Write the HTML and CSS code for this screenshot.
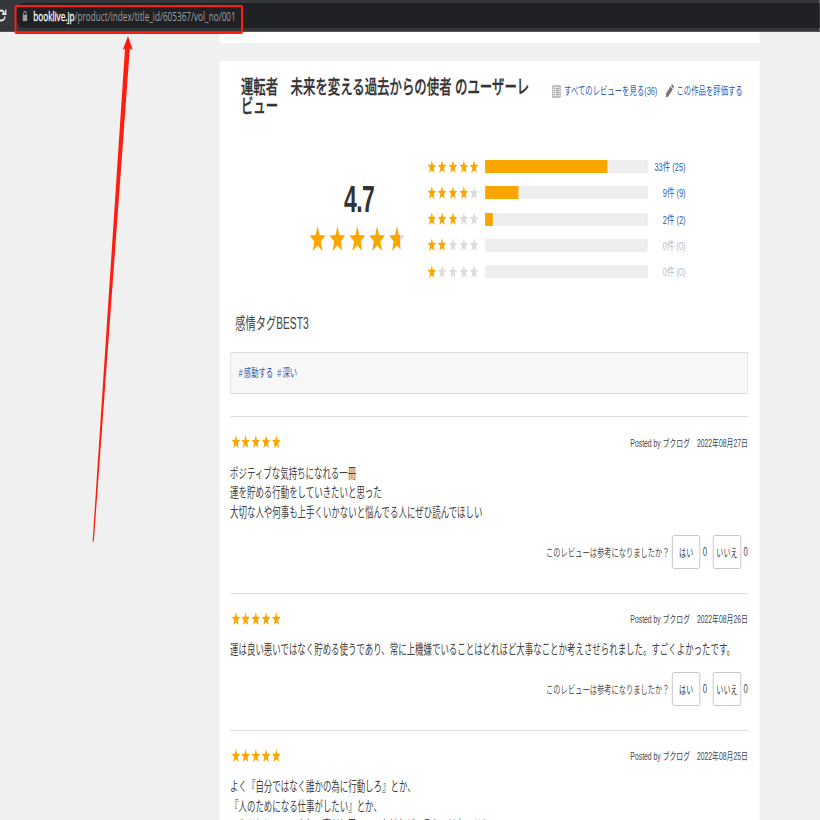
FILE: index.html
```html
<!DOCTYPE html>
<html lang="ja">

<head>
    <meta charset="UTF-8">
    <meta name="viewport" content="width=device-width, initial-scale=1.0">
    <title>ユーザーレビュー</title>
    <link rel="stylesheet" href="styles.css">
</head>

<body>

    <svg class="defs">
        <symbol id="star" viewBox="0 0 24 24" preserveAspectRatio="none">
            <path d="M12 0L15 8.7L24 9.1L17 14.8L19.5 24L12 18.8L4.5 24L7 14.8L0 9.1L9 8.7Z" />
        </symbol>
    </svg>

    <div class="page">
        <div class="toolbar">
            <svg class="reload" viewBox="0 0 11 13">
                <path d="M0 1.8C3 1 5.5 2 7 4.5M0 11.2C4 12 7 10.5 8 7.5M9 .5V5H3.5" />
            </svg>
            <div class="address">
                <svg class="lock" viewBox="0 0 9 12">
                    <path d="M2 5V3.2a2.5 2.5 0 0 1 5 0V5" />
                    <rect x="0" y="4.5" width="9" height="7.5" rx="1" />
                </svg>
                <span class="url"><b>booklive.jp</b>/product/index/title_id/605367/vol_no/001</span>
            </div>
        </div>

        <div class="strip"></div>

        <div class="container">
            <div class="header">
                <h2>運転者　未来を変える過去からの使者 のユーザーレビュー</h2>
                <div class="links">
                    <a>
                        <svg class="icon-list" viewBox="0 0 14 13">
                            <path d="M.5 .5H13.5V12.5H.5ZM3 3.2H4.5M6 3.2H11.5M3 5.4H4.5M6 5.4H11.5M3 7.6H4.5M6 7.6H11.5M3 9.8H4.5M6 9.8H11.5" />
                        </svg>
                        すべてのレビューを見る(36)
                    </a>
                    <a>
                        <svg class="icon-pen" viewBox="0 0 14 14">
                            <path d="M0 14L1 9.5L8.5 2L12 5.5L4.5 13ZM9.3 1.2L10.5 0H12L14 2V3.5L12.8 4.7Z" />
                        </svg>
                        この作品を評価する
                    </a>
                </div>
            </div>

            <div class="summary">
                <div class="score">
                    <div class="number">4.7</div>
                    <div class="stars big">
                        <svg><use href="#star" /></svg><svg><use href="#star" /></svg><svg><use href="#star" /></svg><svg><use href="#star" /></svg><svg class="part" viewBox="0 0 24 24" preserveAspectRatio="none">
                            <linearGradient id="partial">
                                <stop offset="0.7" stop-color="#f9a700" />
                                <stop offset="0.7" stop-color="#dcdcdc" />
                            </linearGradient>
                            <path d="M12 0L15 8.7L24 9.1L17 14.8L19.5 24L12 18.8L4.5 24L7 14.8L0 9.1L9 8.7Z" />
                        </svg>
                    </div>
                </div>
                <div class="graph" id="graph"></div>
            </div>

            <h3>感情タグBEST3</h3>
            <div class="tags"><a><i>#</i>感動する</a><a><i>#</i>深い</a></div>

            <div id="reviews"></div>
        </div>
    </div>

    <svg class="marker" viewBox="0 0 260 560">
        <rect x="15.5" y="6" width="226.5" height="27" rx="1" />
        <path d="M128 36L132.7 50L129.8 48.5L93.8 541.5H92.6L125 48.5L122.7 50Z" />
    </svg>

    <script>
        const graph = [
            { stars: 5, width: 75, label: '33件 (25)' },
            { stars: 4, width: 20.5, label: '9件 (9)' },
            { stars: 3, width: 4.6, label: '2件 (2)' },
            { stars: 2, width: 0, label: '0件 (0)' },
            { stars: 1, width: 0, label: '0件 (0)' }
        ];

        const reviews = [
            { date: '2022年08月27日', text: ['ポジティブな気持ちになれる一冊', '運を貯める行動をしていきたいと思った', '大切な人や何事も上手くいかないと悩んでる人にぜひ読んでほしい'] },
            { date: '2022年08月26日', text: ['運は良い悪いではなく貯める使うであり、常に上機嫌でいることはどれほど大事なことか考えさせられました。すごくよかったです。'] },
            { date: '2022年08月25日', text: ['よく『自分ではなく誰かの為に行動しろ』とか、', '『人のためになる仕事がしたい』とか、', 'いうことについてきれい事だと思っていたけれど、そうではないこと'] }
        ];

        function stars(count) {
            let html = '';
            for (let i = 0; i < 5; i++) {
                html += `<svg class="${i < count ? '' : 'off'}"><use href="#star" /></svg>`;
            }
            return html;
        }

        document.getElementById('graph').innerHTML = graph.map(row => `
            <div class="row">
                <div class="stars">${stars(row.stars)}</div>
                <div class="bar"><div class="fill" style="width: ${row.width}%"></div></div>
                <div class="count ${row.width ? '' : 'none'}">${row.label}</div>
            </div>`).join('');

        document.getElementById('reviews').innerHTML = reviews.map(review => `
            <div class="review">
                <div class="review-head">
                    <div class="stars">${stars(5)}</div>
                    <div class="posted">Posted by ブクログ　${review.date}</div>
                </div>
                <p>${review.text.join('<br>')}</p>
                <div class="vote">
                    <span>このレビューは参考になりましたか？</span>
                    <button>はい</button><span class="votes">0</span>
                    <button>いいえ</button><span class="votes">0</span>
                </div>
            </div>`).join('');
    </script>

</body>

</html>
```
FILE: styles.css
```css
html {
    overflow: hidden;
}

body {
    margin: 0;
    height: 820px;
    overflow: hidden;
    position: relative;
    background-color: #f0f0f0;
    font-family: "Liberation Sans", "Noto Sans CJK JP", sans-serif;
    color: #444;
}

* {
    box-sizing: border-box;
}

.defs {
    display: none;
}

/* everything is laid out wide, then narrowed */
.page {
    width: 1281.25px;
    height: 820px;
    overflow: hidden;
    transform: scaleX(0.64);
    transform-origin: 0 0;
}

.toolbar {
    display: flex;
    height: 32px;
    padding-top: 3px;
    background-color: #35363a;
    border-bottom: 1px solid #55565a;
}

.reload {
    width: 11px;
    height: 13px;
    margin: 6px 14px 0 0;
    fill: none;
    stroke: #e8eaed;
    stroke-width: 2;
}

.address {
    display: flex;
    align-items: center;
    flex: 1;
    height: 25px;
    padding-left: 10px;
    border-radius: 12px 0 0 12px;
    background-color: #202124;
}

.lock {
    width: 8px;
    height: 10px;
    margin-right: 9px;
    fill: #9aa0a6;
}

.lock path {
    fill: none;
    stroke: #9aa0a6;
    stroke-width: 1.4;
}

.url {
    font-family: "Open Sans", sans-serif;
    font-size: 12.8px;
    line-height: 20px;
    color: #9aa0a6;
    white-space: nowrap;
}

.url b {
    font-weight: 500;
    color: #fff;
    -webkit-text-stroke: 0.3px #fff;
}

.strip {
    width: 844px;
    height: 11px;
    margin-left: 343px;
    background-color: #fff;
}

.container {
    width: 844px;
    height: 759px;
    overflow: hidden;
    margin: 18px 0 0 342.5px;
    padding: 17px 18px 0 17px;
    background-color: #fff;
}

.header {
    display: flex;
    justify-content: space-between;
    height: 74px;
    padding: 0 8px 0 17px;
}

h2 {
    width: 460px;
    margin: 0;
    font-size: 19.4px;
    line-height: 19.3px;
    font-weight: 500;
    color: #333;
    -webkit-text-stroke: 0.3px #333;
}

.links {
    display: flex;
    gap: 13px;
    height: 26px;
    align-items: center;
}

a {
    display: flex;
    align-items: center;
    font-size: 11.5px;
    line-height: 16px;
    color: #2d5db8;
    white-space: nowrap;
}

.icon-list {
    width: 13px;
    height: 13px;
    margin-right: 5px;
    fill: #e8e8e8;
    stroke: #777;
}

.icon-pen {
    width: 13px;
    height: 14px;
    margin-right: 4px;
    fill: #777;
}

.summary {
    display: flex;
    height: 154px;
}

.score {
    width: 308px;
    padding: 28px 0 0 124px;
}

.number {
    width: 155px;
    font-size: 36px;
    line-height: 40px;
    letter-spacing: -1px;
    font-weight: bold;
    text-align: center;
    color: #333;
}

.stars {
    display: flex;
    gap: 3.2px;
}

.stars svg {
    width: 13.5px;
    height: 13px;
    fill: #f9a700;
}

.stars svg.off {
    fill: #dcdcdc;
}

.stars.big {
    gap: 6.5px;
    margin-top: 6px;
}

.stars.big svg {
    width: 24.5px;
    height: 25px;
}

.stars.big svg.part {
    fill: url(#partial);
}

.row {
    display: flex;
    align-items: center;
    height: 13px;
    margin: 8px 0 13.3px;
}

.row .stars {
    margin-top: -1px;
}

.row + .row {
    margin-top: 0;
}

.bar {
    width: 254px;
    height: 13px;
    margin-left: 10.5px;
    background-color: #eee;
}

.fill {
    height: 100%;
    background-color: #f9a700;
}

.count {
    width: 59px;
    font-size: 11.7px;
    line-height: 13px;
    text-align: right;
    color: #2d5db8;
}

.count.none {
    color: #bbb;
}

h3 {
    margin: 7px 0 0 8px;
    font-size: 16px;
    line-height: 22px;
    font-weight: normal;
}

.tags {
    display: flex;
    gap: 6px;
    height: 41.5px;
    margin-top: 17px;
    padding-left: 12px;
    border: 1px solid #ddd;
    background-color: #f7f7f7;
}

.tags i {
    margin-right: 2px;
}

.review {
    height: 137px;
    padding-top: 15px;
    border-top: 1px solid #ddd;
}

.review:first-child {
    height: 176.5px;
    margin-top: 22.5px;
}

.review-head {
    display: flex;
    justify-content: space-between;
    align-items: center;
    height: 20px;
}

.review .stars {
    gap: 2.4px;
    margin: -1px 0 0 2px;
}

.posted {
    padding-top: 1px;
    font-size: 10.7px;
    line-height: 18px;
}

p {
    margin: 11.5px 0 12.5px;
    font-size: 13.19px;
    line-height: 19.7px;
    white-space: nowrap;
}

.vote {
    display: flex;
    align-items: center;
    justify-content: flex-end;
    height: 34px;
    font-size: 11.35px;
    color: #555;
}

button {
    width: 44px;
    height: 34px;
    margin-left: 4px;
    padding: 0;
    border: 1px solid #bbb;
    border-radius: 3px;
    background-color: #fff;
    font-family: inherit;
    font-size: 11px;
    color: #444;
}

.votes {
    margin-left: 4px;
    font-size: 12px;
    color: #444;
}

.votes + button {
    margin-left: 9px;
}

/* red box and arrow over the page */
.marker {
    position: absolute;
    left: 0;
    top: 0;
    width: 260px;
    height: 560px;
    fill: #ff1d0d;
}

.marker rect {
    fill: none;
    stroke: #ff1d0d;
    stroke-width: 2;
}
```
